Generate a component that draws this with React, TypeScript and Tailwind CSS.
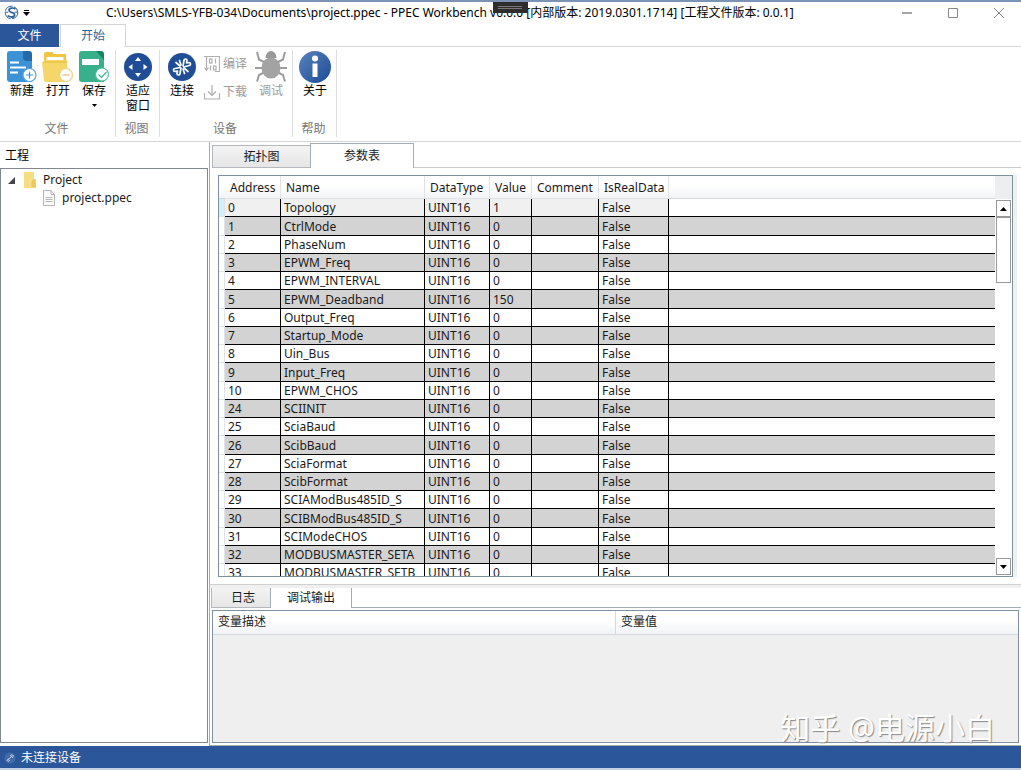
import { useState, type ReactNode } from "react";
import clsx from "clsx";

type Param = {
    address: number;
    name: string;
    value: number;
};

const PARAMS: Param[] = [
    { address: 0, name: "Topology", value: 1 },
    { address: 1, name: "CtrlMode", value: 0 },
    { address: 2, name: "PhaseNum", value: 0 },
    { address: 3, name: "EPWM_Freq", value: 0 },
    { address: 4, name: "EPWM_INTERVAL", value: 0 },
    { address: 5, name: "EPWM_Deadband", value: 150 },
    { address: 6, name: "Output_Freq", value: 0 },
    { address: 7, name: "Startup_Mode", value: 0 },
    { address: 8, name: "Uin_Bus", value: 0 },
    { address: 9, name: "Input_Freq", value: 0 },
    { address: 10, name: "EPWM_CHOS", value: 0 },
    { address: 24, name: "SCIINIT", value: 0 },
    { address: 25, name: "SciaBaud", value: 0 },
    { address: 26, name: "ScibBaud", value: 0 },
    { address: 27, name: "SciaFormat", value: 0 },
    { address: 28, name: "ScibFormat", value: 0 },
    { address: 29, name: "SCIAModBus485ID_S", value: 0 },
    { address: 30, name: "SCIBModBus485ID_S", value: 0 },
    { address: 31, name: "SCIModeCHOS", value: 0 },
    { address: 32, name: "MODBUSMASTER_SETA", value: 0 },
    { address: 33, name: "MODBUSMASTER_SETB", value: 0 },
];

const HEADERS = ["Address", "Name", "DataType", "Value", "Comment", "IsRealData"];

function LogoIcon() {
    return (
        <svg width="15" height="15" viewBox="0 0 15 15" fill="none" stroke="#2f6399">
            <circle cx="7.5" cy="7.5" r="6.3" strokeWidth="1" strokeDasharray="9 1.5" />
            <path d="M11.5 4.2C9.5 2.2 5 2.8 5 5.2c0 2.6 5.6 1.8 5.6 4.6 0 2.4-4.4 2.8-7 .8" strokeWidth="1.7" />
            <path d="M1 7.2h3.2M10.5 7.2h3.4M7 12.6l3.6-.6" strokeWidth="1" />
        </svg>
    );
}

function NewIcon() {
    return (
        <svg width="32" height="32" viewBox="0 0 32 32" fill="none">
            <path d="M4 1h15l7 8v23H4a3 3 0 0 1-3-3V4a3 3 0 0 1 3-3z" fill="#3b93d6" />
            <path d="M17 1h6a3 3 0 0 1 3 3v7h-5a4 4 0 0 1-4-4z" fill="#2569a8" />
            <path d="M4 12.5h9M4 17.5h16M4 22.5h8" stroke="#fff" strokeWidth="1.8" />
            <circle cx="23.5" cy="25" r="6.5" fill="#fff" stroke="#5aa2dc" strokeWidth="1.2" />
            <path d="M23.5 21.5v7M20 25h7" stroke="#3b93d6" strokeWidth="1.2" />
        </svg>
    );
}

function OpenIcon() {
    return (
        <svg width="32" height="32" viewBox="0 0 32 32" fill="none">
            <path d="M2 4a2 2 0 0 1 2-2h6l2 2h12v27H5L2 9z" fill="#efc541" />
            <path d="M4.5 7h17v3h-17z" fill="#fff" />
            <path d="M0 12h3l1-2h21v22H4a2 2 0 0 1-2-2z" fill="#f6d668" />
            <path d="M1 12h24" stroke="#e4b93a" strokeWidth="1" />
            <circle cx="24" cy="25" r="6.5" fill="#fff" stroke="#f3cd85" strokeWidth="1.2" />
            <path d="M20.5 25h7" stroke="#efba6e" strokeWidth="1.2" />
        </svg>
    );
}

function SaveIcon() {
    return (
        <svg width="32" height="32" viewBox="0 0 32 32" fill="none">
            <path d="M4 1h19l3 3v28H4a3 3 0 0 1-3-3V4a3 3 0 0 1 3-3z" fill="#38b08c" />
            <path d="M18 1h5a3 3 0 0 1 3 3v6z" fill="#17855f" />
            <path d="M4 9h17v6H4z" fill="#fff" />
            <circle cx="24" cy="24.5" r="6.5" fill="#fff" stroke="#55bb9c" strokeWidth="1.2" />
            <path d="M20.5 24.5l3 3 5-5.5" stroke="#38b08c" strokeWidth="1.2" />
        </svg>
    );
}

function FitIcon() {
    return (
        <svg width="32" height="32" viewBox="0 0 32 32">
            <circle cx="16" cy="17" r="14" fill="#1f4e96" />
            <path d="M16 7l3 4h-6zM16 27l3-4h-6zM6.5 17l4-3v6zM25.5 17l-4-3v6z" fill="#fff" />
        </svg>
    );
}

function ConnectIcon() {
    return (
        <svg width="32" height="32" viewBox="0 0 32 32" fill="none">
            <circle cx="16" cy="17" r="14" fill="#1f4e96" />
            <g stroke="#fff" strokeWidth="1.7" strokeLinecap="round" strokeLinejoin="round">
                <path d="M17 16l1-5.500a1.500 1.500 0 0 1 3 0l-.500 2.500 2.500-.500a1.500 1.500 0 0 1 0 3L18 17" />
                <path d="M15 18l-1 5.500a1.500 1.500 0 0 1-3 0l.500-2.500-2.500.500a1.500 1.500 0 0 1 0-3l5-1" />
                <path d="M15 15l-1.500-4.500M14 16l-4-3.500M17 19l1.500 4.500M18 18l4 3.500" />
            </g>
        </svg>
    );
}

function BugIcon() {
    return (
        <svg width="32" height="32" viewBox="0 0 32 32" fill="none">
            <g stroke="#9d9d9d" strokeWidth="2">
                <path d="M10 12.5L4 9.5 2 2M22 12.5l6-3L30 2M9 18H0M23 18h9M10 22l-6 3-2 6.5M22 22l6 3 2 6.5" />
            </g>
            <path d="M10.5 8a5.5 7 0 0 1 11 0z" fill="#999999" />
            <ellipse cx="16" cy="18" rx="9.5" ry="10.5" fill="#a3a3a3" />
        </svg>
    );
}

function InfoIcon() {
    return (
        <svg width="32" height="34" viewBox="0 0 32 34" className="-mb-0.5">
            <defs>
                <linearGradient id="info" x1="0" y1="0" x2="1" y2="1">
                    <stop offset="0" stopColor="#5b82bd" />
                    <stop offset="1" stopColor="#1c4b95" />
                </linearGradient>
            </defs>
            <circle cx="16" cy="17" r="16" fill="url(#info)" />
            <circle cx="16" cy="8.5" r="3" fill="#fff" />
            <path d="M13.5 13.5h5V27h-5z" fill="#fff" />
        </svg>
    );
}

function CompileIcon() {
    return (
        <svg width="16" height="18" viewBox="0 0 16 18" fill="none" stroke="#b0b0b0" strokeWidth="1.2">
            <path d="M0 1.5h15.5v15H11M2.5 1.5v13M.5 12.5l2 3 2-3" />
            <rect x="5.5" y="4" width="2.5" height="4" />
            <path d="M11.5 3.5v5M6.5 10.5v5" />
            <rect x="9.5" y="11" width="2.5" height="4" />
        </svg>
    );
}

function DownloadIcon() {
    return (
        <svg width="16" height="16" viewBox="0 0 16 16" fill="none" stroke="#adadad" strokeWidth="1.2">
            <path d="M.5 9v6h15V9M8 1v10M4 7.5l4 4 4-4" />
        </svg>
    );
}

function Triangle({ up, className }: { up?: boolean; className?: string }) {
    return (
        <svg width="7" height="4" viewBox="0 0 7 4" className={className}>
            <path d={up ? "M0 4h7L3.5 0z" : "M0 0h7L3.5 4z"} fill="#000" />
        </svg>
    );
}

function RibbonGroup({ label, className, children }: { label: string; className: string; children: ReactNode }) {
    return (
        <section
            aria-label={label}
            className={clsx("flex flex-col justify-between border-r border-[#dcdcdc]", className)}
        >
            <div className="flex pl-1">{children}</div>
            <div className="pr-0.5 text-center leading-4 text-[#777777]">{label}</div>
        </section>
    );
}

function RibbonButton({ icon, label, disabled, children }: {
    icon: ReactNode;
    label: string;
    disabled?: boolean;
    children?: ReactNode;
}) {
    return (
        <button
            type="button"
            disabled={disabled}
            className="flex w-9 flex-col items-center leading-[15px] text-black disabled:text-[#9b9b9b]"
        >
            {icon}
            <span className="mt-px w-6">{label}</span>
            {children}
        </button>
    );
}

function SmallButton({ icon, label }: { icon: ReactNode; label: string }) {
    return (
        <button type="button" disabled className="flex h-7 items-center gap-[3px] whitespace-nowrap text-[#9b9b9b]">
            {icon}
            {label}
        </button>
    );
}

function TitleBar() {
    return (
        <header className="relative flex h-6 shrink-0 items-center border-t-2 border-[#7b93b5] pb-px">
            <div className="flex w-[106px] items-center gap-1 pl-1">
                <LogoIcon />
                <button type="button" aria-label="自定义快速访问工具栏" className="flex flex-col items-center">
                    <span className="mb-px h-px w-[5px] bg-black" />
                    <Triangle />
                </button>
            </div>
            <h1 className="flex-1 whitespace-nowrap text-black">
                C:\Users\SMLS-YFB-034\Documents\project.ppec - PPEC Workbench v0.0.0 [内部版本: 2019.0301.1714] [工程文件版本: 0.0.1]
            </h1>
            <div className="absolute left-1/2 top-0 -ml-[18px] flex h-[11px] w-[35px] flex-col items-center justify-center gap-px bg-[#2d2d2d]">
                <span className="h-px w-6 bg-[#777777]" />
                <span className="h-px w-6 bg-[#777777]" />
            </div>
            <div className="flex items-center gap-[34px] pr-4 text-[#888888]">
                <button type="button" aria-label="最小化">
                    <svg width="12" height="12" viewBox="0 0 12 12" stroke="currentColor">
                        <path d="M1 6h10" strokeWidth="1.5" />
                    </svg>
                </button>
                <button type="button" aria-label="最大化">
                    <svg width="12" height="12" viewBox="0 0 12 12" fill="none" stroke="currentColor">
                        <path d="M1.5 1.5h9v9h-9z" />
                    </svg>
                </button>
                <button type="button" aria-label="关闭">
                    <svg width="12" height="12" viewBox="0 0 12 12" stroke="currentColor">
                        <path d="M1 1l10 10M11 1L1 11" />
                    </svg>
                </button>
            </div>
        </header>
    );
}

function Ribbon() {
    return (
        <>
            <nav className="flex h-[23px] shrink-0">
                <button type="button" className="w-[59px] bg-[#2b579a] text-white">文件</button>
                <div className="w-px border-b border-[#d5d5d5]" />
                <button type="button" className="w-[66px] border-x border-t border-[#d5d5d5] text-[#2a6796]">开始</button>
                <div className="flex-1 border-b border-[#d5d5d5]" />
            </nav>
            <div className="flex h-[95px] shrink-0 border-b border-[#d5d5d5] pb-1 pt-[3px]">
                <RibbonGroup label="文件" className="w-[116px]">
                    <RibbonButton icon={<NewIcon />} label="新建" />
                    <RibbonButton icon={<OpenIcon />} label="打开" />
                    <RibbonButton icon={<SaveIcon />} label="保存">
                        <Triangle className="mt-1.5 h-[3px] w-[5px]" />
                    </RibbonButton>
                </RibbonGroup>
                <RibbonGroup label="视图" className="w-11">
                    <RibbonButton icon={<FitIcon />} label="适应窗口" />
                </RibbonGroup>
                <RibbonGroup label="设备" className="w-[133px]">
                    <RibbonButton icon={<ConnectIcon />} label="连接" />
                    <div className="ml-1 flex w-[49px] flex-col">
                        <SmallButton icon={<CompileIcon />} label="编译" />
                        <SmallButton icon={<DownloadIcon />} label="下载" />
                    </div>
                    <RibbonButton icon={<BugIcon />} label="调试" disabled />
                </RibbonGroup>
                <RibbonGroup label="帮助" className="w-11">
                    <RibbonButton icon={<InfoIcon />} label="关于" />
                </RibbonGroup>
            </div>
        </>
    );
}

function ProjectTree() {
    return (
        <aside className="flex w-[209px] shrink-0 flex-col pb-[3px] pr-px">
            <h2 className="h-[26px] px-[5px] leading-[27px] text-black">工程</h2>
            <ul className="flex-1 border border-[#828790] pt-0.5 leading-[18px]">
                <li>
                    <div className="flex items-center pl-[7px]">
                        <svg width="7" height="7" viewBox="0 0 7 7">
                            <path d="M7 0v7H0z" fill="#444444" />
                        </svg>
                        <svg width="14" height="16" viewBox="0 0 14 16" className="ml-2">
                            <path d="M1 0h9l1 1v15H1z" fill="#f6dc83" />
                            <path d="M9 7h4v9H8V9z" fill="#e9c960" stroke="#fff3c4" strokeWidth="0.5" />
                        </svg>
                        <span className="ml-[6px]">Project</span>
                    </div>
                    <ul>
                        <li className="flex items-center pl-[42px]">
                            <svg width="12" height="16" viewBox="0 0 12 16" fill="none" stroke="#b5b5b5">
                                <path d="M.5.5H8l3.500 4v11H.5zM8 .5v4h3.500" fill="#fafafa" />
                                <path d="M2.5 7.500h7M2.500 9.500h7M2.500 11.500h7" />
                            </svg>
                            <span className="ml-[7px]">project.ppec</span>
                        </li>
                    </ul>
                </li>
            </ul>
        </aside>
    );
}

function ParamTable() {
    return (
        <div className="flex min-h-0 flex-1 border border-[#7d91a3] bg-white">
            <div className="min-w-0 flex-1 overflow-hidden">
                <table className="w-full table-fixed border-separate border-spacing-0 text-left">
                    <colgroup>
                        <col className="w-[6px]" />
                        <col className="w-[56px]" />
                        <col className="w-[144px]" />
                        <col className="w-[65px]" />
                        <col className="w-[42px]" />
                        <col className="w-[67px]" />
                        <col className="w-[70px]" />
                        <col />
                    </colgroup>
                    <thead>
                        <tr className="h-[23px] bg-linear-to-b from-white from-40% to-[#f1f3f5]">
                            <th className="border-b border-[#d5d9de]" />
                            {HEADERS.map((header) => (
                                <th key={header} className="whitespace-nowrap border-b border-r border-[#dfe3e7] pl-[5px] pt-0.5 font-normal">
                                    {header}
                                </th>
                            ))}
                            <th className="border-b border-[#d5d9de]" />
                        </tr>
                    </thead>
                    <tbody>
                        {PARAMS.map((param, i) => (
                            <tr
                                key={param.address}
                                className={clsx(
                                    "leading-[17px] *:whitespace-nowrap *:border-b *:border-black *:pl-[3px]",
                                    i % 4 === 1 ? "h-[19px]" : "h-[18px]",
                                    i % 2 === 1 && "bg-[#d3d3d3]",
                                )}
                            >
                                <th className={clsx("border-r border-[#dfe3e7]!", i === 0 ? "bg-[#d5effa]" : "bg-white")} />
                                {[param.address, param.name, "UINT16", param.value, "", "False"].map((cell, col) => (
                                    <td key={col} className={clsx("border-r", i === 0 && "bg-[#f0f0f0]")}>
                                        {cell}
                                    </td>
                                ))}
                                <td />
                            </tr>
                        ))}
                    </tbody>
                </table>
            </div>
            <div className="flex w-[17px] flex-col">
                <div className="h-[23px] bg-[#eceef0]" />
                <div className="flex flex-1 flex-col px-px pb-px">
                    <button type="button" aria-label="向上滚动" className="mt-px flex h-[17px] items-center justify-center border border-[#999999]">
                        <Triangle up />
                    </button>
                    <div className="h-[66px] border border-[#999999]" />
                    <button type="button" aria-label="向下滚动" className="mt-auto flex h-[17px] items-center justify-center border border-[#999999]">
                        <Triangle />
                    </button>
                </div>
            </div>
        </div>
    );
}

function OutputPanel() {
    return (
        <div className="flex h-[133px] flex-col border border-[#7d91a3] bg-[#efefef]">
            <table className="w-full table-fixed text-left">
                <thead>
                    <tr className="h-[23px] bg-linear-to-b from-white from-40% to-[#f1f3f5]">
                        <th className="border-b border-r border-[#d5d9de] pl-[5px] font-normal">变量描述</th>
                        <th className="border-b border-[#d5d9de] pl-[5px] font-normal">变量值</th>
                    </tr>
                </thead>
            </table>
        </div>
    );
}

const TAB_ACTIVE = "border-[#a5acb2] bg-white";
const TAB_IDLE = "border-[#b5b9bd] bg-linear-to-b from-[#f3f3f3] to-[#e6e6e6]";

export default function App() {
    const [view, setView] = useState("params");
    const [output, setOutput] = useState("debug");

    return (
        <div className="flex h-screen flex-col overflow-hidden bg-white font-['Noto_Sans','Noto_Sans_CJK_SC',sans-serif] text-[12px] text-[#1a1a1a]">
            <TitleBar />
            <Ribbon />
            <main className="flex min-h-0 flex-1">
                <ProjectTree />
                <div className="flex min-w-0 flex-1 flex-col border-l border-[#a5acb2]">
                    <div role="tablist" className="flex h-[26px] items-end pl-0.5">
                        <button
                            type="button"
                            role="tab"
                            aria-selected={view === "topology"}
                            onClick={() => setView("topology")}
                            className={clsx("h-[23px] w-[98px] border-y border-l", view === "topology" ? TAB_ACTIVE : TAB_IDLE)}
                        >
                            拓扑图
                        </button>
                        <button
                            type="button"
                            role="tab"
                            aria-selected={view === "params"}
                            onClick={() => setView("params")}
                            className={clsx("h-[25px] w-[104px] border-x border-t", view === "params" ? TAB_ACTIVE : TAB_IDLE)}
                        >
                            参数表
                        </button>
                        <div className="h-px flex-1 bg-[#cccccc]" />
                    </div>
                    <div className="flex min-h-0 flex-1 flex-col border-b border-[#d0d0d0] pb-[7px] pl-2 pt-[7px]">
                        <div className="mr-1 flex min-h-0 flex-1 border-r-4 border-[#f0f0f0]">
                            <ParamTable />
                        </div>
                    </div>
                    <div role="tablist" className="flex h-[23px] border-t-[3px] border-[#f0f0f0]">
                        <button
                            type="button"
                            role="tab"
                            aria-selected={output === "log"}
                            onClick={() => setOutput("log")}
                            className={clsx("ml-px w-[59px] border-b border-l", output === "log" ? TAB_ACTIVE : TAB_IDLE)}
                        >
                            <span className="pl-1">日志</span>
                        </button>
                        <button
                            type="button"
                            role="tab"
                            aria-selected={output === "debug"}
                            onClick={() => setOutput("debug")}
                            className={clsx("w-[82px] border-x", output === "debug" ? TAB_ACTIVE : TAB_IDLE)}
                        >
                            调试输出
                        </button>
                        <div className="flex-1 border-b border-[#a5acb2]" />
                    </div>
                    <div className="border-b border-[#a5acb2] px-0.5 py-0.5">
                        <OutputPanel />
                    </div>
                </div>
            </main>
            <footer className="flex h-6 shrink-0 items-center border-b-2 border-[#c3cfe2] bg-[#2b579a] pl-1 pt-px text-white">
                <svg width="12" height="12" viewBox="0 0 12 12" fill="none">
                    <circle cx="6" cy="6" r="5.5" fill="#426ba9" />
                    <path d="M3.5 8.5l5-5M4.5 6.500l-1.500 2 1 1 2-1.500M6 4l2-1.500 1.500 1.500L8 6" stroke="#b8cae4" />
                </svg>
                <span className="ml-[5px]">未连接设备</span>
            </footer>
            <div className="pointer-events-none absolute bottom-[22px] right-[26px] text-[30px] leading-10 text-white [text-shadow:1px_1px_1px_#888888]">
                知乎 @电源小白
            </div>
        </div>
    );
}
